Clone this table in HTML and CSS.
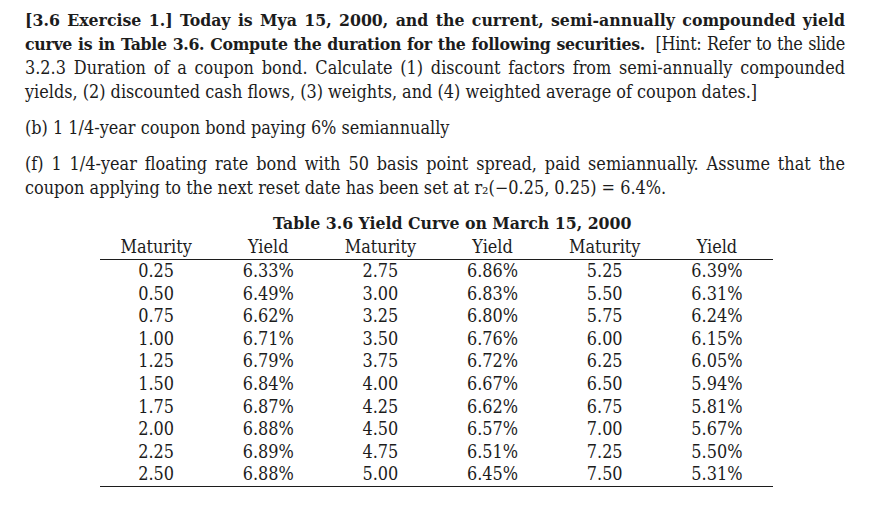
FILE: index.html
```html
<!DOCTYPE html>
<html lang="en">
<head>
<meta charset="utf-8">
<title>Exercise 3.6</title>
<link rel="stylesheet" href="styles.css">
</head>
<body>
<main class="page">
  <p class="para">
    <span class="line just"><b>[3.6 Exercise 1.] Today is Mya 15, 2000, and the current, semi-annually compounded yield</b></span>
    <span class="line just tight"><b>curve is in Table 3.6. Compute the duration for the following securities.</b> [Hint: Refer to the slide</span>
    <span class="line just">3.2.3 Duration of a coupon bond. Calculate (1) discount factors from semi-annually compounded</span>
    <span class="line">yields, (2) discounted cash flows, (3) weights, and (4) weighted average of coupon dates.]</span>
  </p>
  <p class="para item">
    <span class="line">(b) 1 1/4-year coupon bond paying 6% semiannually</span>
  </p>
  <p class="para item">
    <span class="line just">(f) 1 1/4-year floating rate bond with 50 basis point spread, paid semiannually. Assume that the</span>
    <span class="line">coupon applying to the next reset date has been set at r₂(−0.25, 0.25) = 6.4%.</span>
  </p>
  <h2 class="caption">Table 3.6 Yield Curve on March 15, 2000</h2>
  <table class="yields">
    <thead>
      <tr><th>Maturity</th><th>Yield</th><th>Maturity</th><th>Yield</th><th>Maturity</th><th>Yield</th></tr>
    </thead>
    <tbody>
      <tr><td>0.25</td><td>6.33%</td><td>2.75</td><td>6.86%</td><td>5.25</td><td>6.39%</td></tr>
      <tr><td>0.50</td><td>6.49%</td><td>3.00</td><td>6.83%</td><td>5.50</td><td>6.31%</td></tr>
      <tr><td>0.75</td><td>6.62%</td><td>3.25</td><td>6.80%</td><td>5.75</td><td>6.24%</td></tr>
      <tr><td>1.00</td><td>6.71%</td><td>3.50</td><td>6.76%</td><td>6.00</td><td>6.15%</td></tr>
      <tr><td>1.25</td><td>6.79%</td><td>3.75</td><td>6.72%</td><td>6.25</td><td>6.05%</td></tr>
      <tr><td>1.50</td><td>6.84%</td><td>4.00</td><td>6.67%</td><td>6.50</td><td>5.94%</td></tr>
      <tr><td>1.75</td><td>6.87%</td><td>4.25</td><td>6.62%</td><td>6.75</td><td>5.81%</td></tr>
      <tr><td>2.00</td><td>6.88%</td><td>4.50</td><td>6.57%</td><td>7.00</td><td>5.67%</td></tr>
      <tr><td>2.25</td><td>6.89%</td><td>4.75</td><td>6.51%</td><td>7.25</td><td>5.50%</td></tr>
      <tr><td>2.50</td><td>6.88%</td><td>5.00</td><td>6.45%</td><td>7.50</td><td>5.31%</td></tr>
    </tbody>
  </table>
</main>
</body>
</html>
```
FILE: styles.css
```css
html, body {
  margin: 0;
  padding: 0;
  background: #ffffff;
}

body {
  font-family: "DejaVu Serif Condensed", "DejaVu Serif", "Liberation Serif", serif;
  font-stretch: semi-condensed;
  font-size: 17.9px;
  color: #1c1c1c;
}

.page {
  width: 820px;
  padding: 8px 0 0 25px;
}

.para {
  margin: 0;
  line-height: 24px;
}

.item {
  margin-top: 12px;
}

.line {
  display: block;
  white-space: nowrap;
}

.line.just {
  white-space: normal;
  text-align: justify;
  text-align-last: justify;
}

.line.tight {
  letter-spacing: -0.3px;
  word-spacing: -3px;
}

.line.tight b {
  margin-right: 5px;
}

b {
  font-weight: bold;
  font-size: 17.5px;
}

.caption {
  margin: 11px 0 0 248px;
  font-size: 17.5px;
  font-weight: bold;
  line-height: 24px;
}

.yields {
  margin-left: 75px;
  border-collapse: collapse;
  table-layout: fixed;
  width: 673px;
}

.yields th,
.yields td {
  width: 112px;
  padding: 0;
  text-align: center;
  font-weight: normal;
}

.yields th {
  line-height: 24px;
  border-bottom: 1px solid #1c1c1c;
}

.yields td {
  line-height: 22.6px;
  height: 22.6px;
}

.yields tbody tr:last-child td {
  border-bottom: 1px solid #1c1c1c;
}
```
